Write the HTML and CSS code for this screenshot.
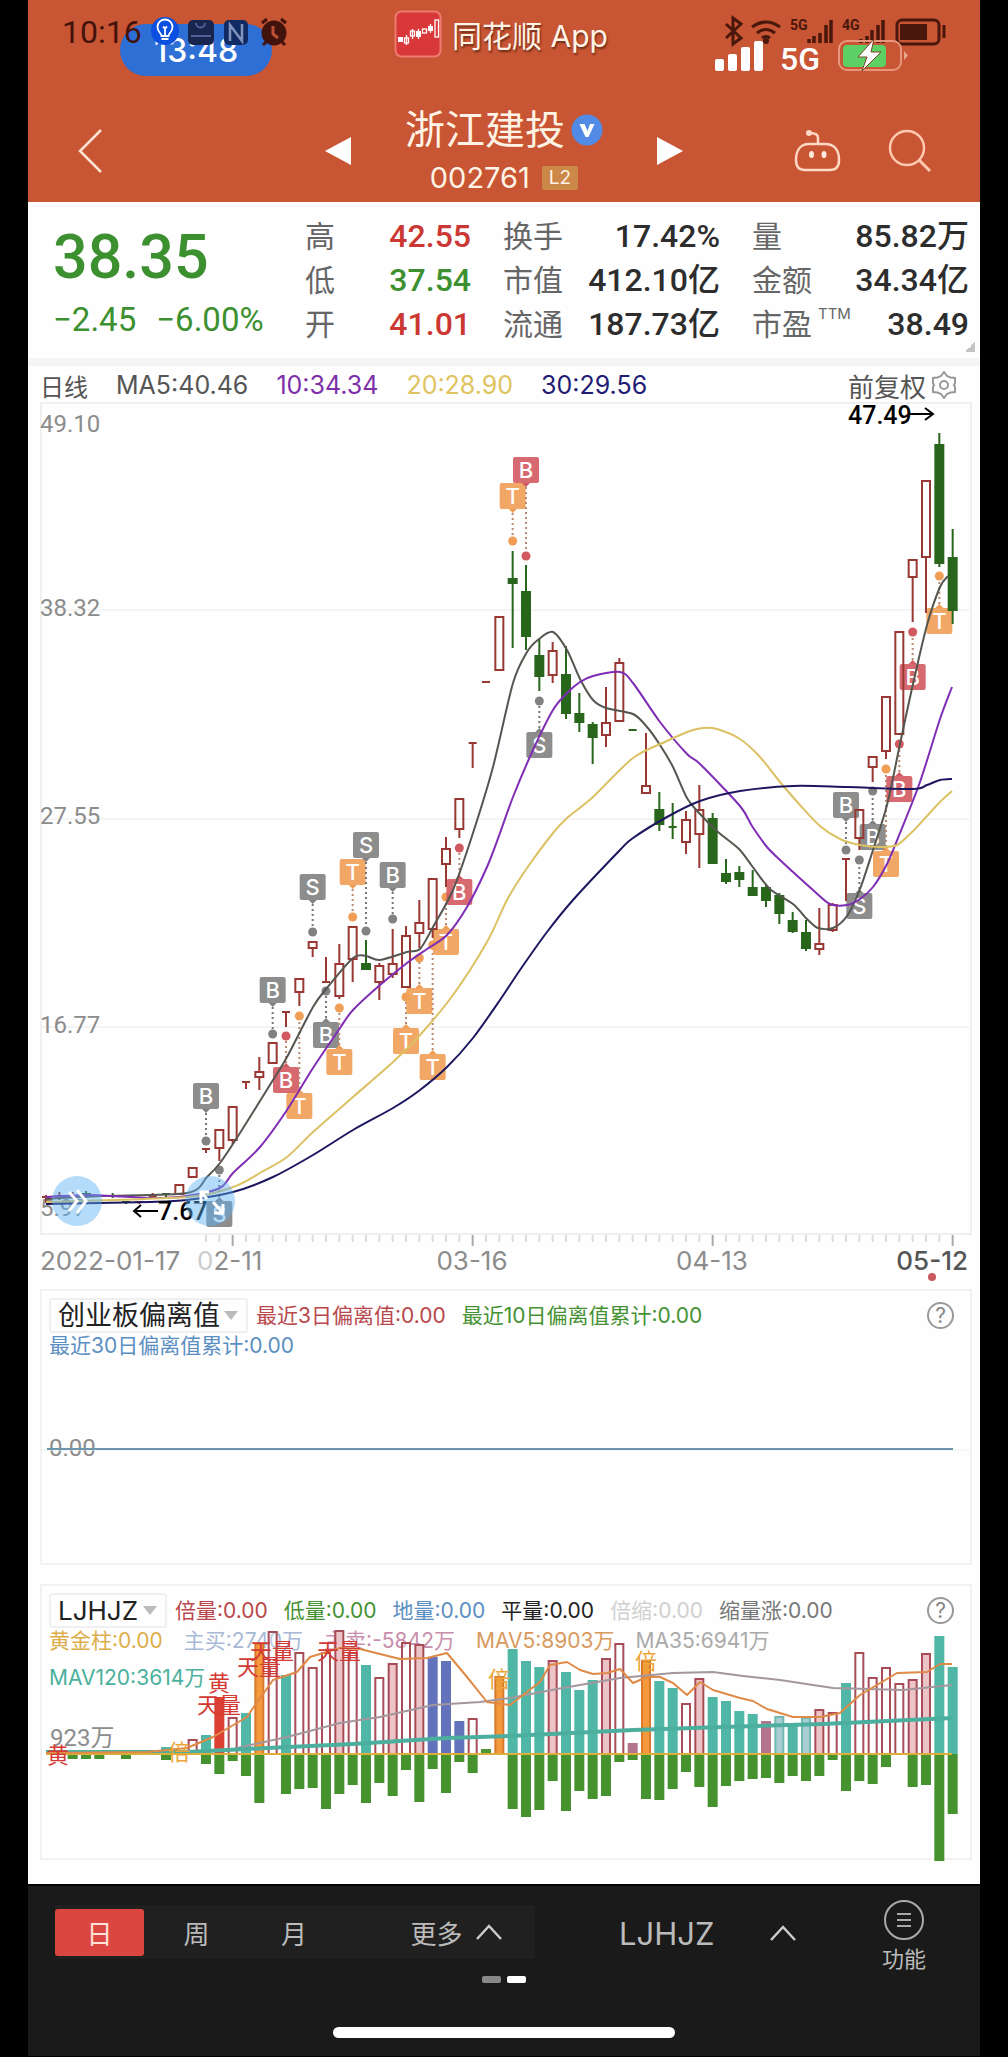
FILE: index.html
```html
<!DOCTYPE html>
<html lang="zh-CN">
<head>
<meta charset="utf-8">
<meta name="viewport" content="width=device-width, initial-scale=1">
<title>浙江建投 002761</title>
<link rel="stylesheet" href="styles.css">
</head>
<body>
<main class="phone">
  <header class="top">
    <div class="status">
      <div class="brand">
        <svg width="48" height="48" viewBox="0 0 48 48"><rect x="1.500" y="1.500" width="45" height="45" rx="6" fill="#d9383b" stroke="#ef7a70" stroke-width="2"/><g fill="#fff"><rect x="4" y="27" width="5" height="5"/><rect x="22" y="21" width="5" height="6"/><rect x="34" y="16" width="5" height="5"/></g><g fill="none" stroke="#fff" stroke-width="1.300"><rect x="10.500" y="28" width="4" height="5"/><rect x="16.500" y="21" width="4" height="5"/><rect x="28.500" y="19" width="4" height="4"/><rect x="41" y="10" width="3.500" height="17"/><path d="M12.500 25v10M18.500 19v10M36.500 14v9M24.500 19v10"/></g></svg>
        <span>同花顺 App</span>
      </div>
      <div class="clock-pill">13:48</div>
      <div class="device-left">
        <span>10:16</span>
        <svg width="140" height="32" viewBox="0 0 140 32">
          <circle cx="15" cy="15" r="14" fill="#0b50e0"/>
          <g fill="none" stroke="#fff" stroke-width="1.800"><path d="M11.500 20c0-3-4-4-4-9a7.500 7.500 0 0 1 15 0c0 5-4 6-4 9zM11.500 23h7M13 10.500l2 2 2-2M15 12v8"/></g>
          <rect x="38" y="4" width="26" height="25" rx="5" fill="#18264f"/><path d="M46 7c0 6 9 6 9 0M41 20h20" fill="none" stroke="#52619a" stroke-width="2"/>
          <rect x="74" y="4" width="24" height="25" rx="5" fill="#102b63"/><path d="M80 25V9l12 16V8" fill="none" stroke="#7f93bd" stroke-width="2.500"/>
          <g stroke="#42130c" fill="none" stroke-width="3"><circle cx="124" cy="17" r="11" fill="#42130c"/><path d="M112 7l5-4M136 7l-5-4M116 26l-3 3M132 26l3 3"/><path d="M123 10v8l5 4" stroke="#bc5034"/></g>
        </svg>
      </div>
      <svg class="device-right" width="232" height="60" viewBox="0 0 232 60">
        <g fill="none" stroke="#4a170d" stroke-width="3">
          <path d="M4 9l15 14-8 6V3l8 6L4 23"/>
          <path d="M30 12q14-10 28 0M35 18q9-7 18 0M40 23q4-3 8 0"/>
          <path d="M87 28v-4M92 28v-7M98 28V18M104 28V10M109 28V5M139 28v-4M145 28v-7M150 28V15M156 28V10M161 28V5" stroke-width="3.500"/>
          <rect x="175" y="5" width="42" height="24" rx="5"/><path d="M222 10v13"/>
        </g>
        <path d="M178 9h27v16h-27z" fill="#4a170d"/>
        <circle cx="44" cy="26" r="3" fill="#4a170d"/>
        <g fill="#4a170d" class="tiny"><text x="68" y="15">5G</text><text x="120" y="15">4G</text></g>
        <g fill="#fff"><rect x="-7" y="44" width="9" height="12" rx="2"/><rect x="6" y="39" width="9" height="17" rx="2"/><rect x="19" y="32" width="9" height="24" rx="2"/><rect x="32" y="26" width="9" height="30" rx="2"/></g>
        <text x="58" y="55" class="net" fill="#fff">5G</text>
        <rect x="117" y="26" width="62" height="29" rx="8" fill="none" stroke="#e8967c" stroke-width="2"/><rect x="121" y="30" width="43" height="22" rx="4" fill="#5cd065"/><path d="M182 36v9l4-4.500z" fill="#e8a590"/><path d="M152 24l-16 18h9l-5 14 19-19h-10z" fill="#fff" stroke="#7a4428" stroke-width="1"/>
      </svg>
    </div>
    <nav class="titlebar">
      <div class="side">
        <button aria-label="返回"><svg width="28" height="46" viewBox="0 0 28 46"><path d="M25 2L4 23l21 21" fill="none" stroke="#ffe3d2" stroke-width="2.500"/></svg></button>
        <button aria-label="上一只"><svg width="26" height="30" viewBox="0 0 26 30"><path d="M26 1v28L0 15z" fill="#fff"/></svg></button>
      </div>
      <div class="stock">
        <h1>浙江建投 <svg width="32" height="32" viewBox="0 0 32 32"><circle cx="16" cy="16" r="15.500" fill="#528be6"/><path d="M8.500 10h5l3 7 2.500-7h4.500l-6 13h-3z" fill="#fff"/></svg></h1>
        <p>002761 <span class="level">L2</span></p>
      </div>
      <div class="side">
        <button aria-label="下一只"><svg width="26" height="30" viewBox="0 0 26 30"><path d="M0 1v28l26-14z" fill="#fff"/></svg></button>
        <span class="tools">
          <button aria-label="智能助手"><svg width="48" height="44" viewBox="0 0 48 44"><g fill="none" stroke="#ffd9c4" stroke-width="2.500"><path d="M15 15h16c10 0 14 7 14 16 0 7-3 10-9 10H11c-6 0-9-3-9-10 0-9 4-16 13-16zM24 15V9c0-3-3-5-8-5"/></g><circle cx="15" cy="4" r="3" fill="#ffd9c4"/><ellipse cx="17.500" cy="25.500" rx="2.500" ry="3.500" fill="#ffe9dc"/><ellipse cx="30" cy="25.500" rx="2.500" ry="3.500" fill="#ffe9dc"/></svg></button>
          <button aria-label="搜索"><svg width="44" height="44" viewBox="0 0 44 44"><circle cx="19" cy="19" r="17" fill="none" stroke="#ffc8b0" stroke-width="2.500"/><path d="M31 31l11 11" stroke="#ffc8b0" stroke-width="3"/></svg></button>
        </span>
      </div>
    </nav>
  </header>

  <section class="quote">
    <div class="price">
      <strong>38.35</strong>
      <p><span>−2.45</span><span>−6.00%</span></p>
    </div>
    <dl>
      <div><dt>高</dt><dd class="up">42.55</dd></div>
      <div><dt>低</dt><dd class="down">37.54</dd></div>
      <div><dt>开</dt><dd class="up">41.01</dd></div>
    </dl>
    <dl>
      <div><dt>换手</dt><dd>17.42%</dd></div>
      <div><dt>市值</dt><dd>412.10亿</dd></div>
      <div><dt>流通</dt><dd>187.73亿</dd></div>
    </dl>
    <dl>
      <div><dt>量</dt><dd>85.82万</dd></div>
      <div><dt>金额</dt><dd>34.34亿</dd></div>
      <div><dt>市盈<sup>TTM</sup></dt><dd>38.49</dd></div>
    </dl>
    <i class="corner"></i>
  </section>

  <div class="averages">
    <span class="period">日线</span>
    <span class="c-ma5">MA5:40.46</span>
    <span class="c-ma10">10:34.34</span>
    <span class="c-ma20">20:28.90</span>
    <span class="c-ma30">30:29.56</span>
    <button class="adjust">前复权<svg width="28" height="28" viewBox="0 0 28 28" fill="none" stroke="#999" stroke-width="2"><path d="M11 5l3-4 3 4 3.500 1.500L25 7v5l-1 2 1 2v5l-4.500.5L17 23l-3 4-3-4-3.500-1.500L3 21v-5l1-2-1-2V7l4.500-.5z"/><circle cx="14" cy="14" r="4"/></svg></button>
  </div>

  <svg id="candles" class="chart main-chart" viewBox="40 402 932 887" role="img" aria-label="日K线图"></svg>

  <section class="panel">
    <svg class="chart" viewBox="40 1289 932 276" role="img" aria-label="偏离值">
      <text x="49" y="1456" class="axis">0.00</text>
      <path d="M41 1450H971" stroke="#eef0f1" stroke-width="1"/>
      <path d="M47 1449H953" stroke="#6d95ad" stroke-width="2"/>
    </svg>
    <div class="legend">
      <div class="row first">
        <span class="picker wide"><select aria-label="指标一"><option>创业板偏离值</option></select><svg width="14" height="9" viewBox="0 0 14 9"><path d="M0 0h14L7 9z" fill="#bbb"/></svg></span>
        <span class="c-red">最近3日偏离值:0.00</span><span class="c-green">最近10日偏离值累计:0.00</span>
        <button class="help" aria-label="说明">?</button>
      </div>
      <div class="row"><span class="c-blue">最近30日偏离值累计:0.00</span></div>
    </div>
  </section>

  <section class="panel">
    <svg id="volume" class="chart" viewBox="40 1584 932 276" role="img" aria-label="成交量"></svg>
    <div class="legend">
      <div class="row first">
        <span class="picker"><select aria-label="指标二"><option>LJHJZ</option></select><svg width="14" height="9" viewBox="0 0 14 9"><path d="M0 0h14L7 9z" fill="#bbb"/></svg></span>
        <span class="c-red">倍量:0.00</span><span class="c-green">低量:0.00</span><span class="c-blue">地量:0.00</span><span class="c-black">平量:0.00</span><span class="c-pale">倍缩:0.00</span><span class="c-gray">缩量涨:0.00</span>
        <button class="help" aria-label="说明">?</button>
      </div>
      <div class="row"><span class="c-gold">黄金柱:0.00</span><span class="c-buy">主买:2740万</span><span class="c-sell">主卖:-5842万</span><span class="c-orange">MAV5:8903万</span><span class="c-silver">MA35:6941万</span></div>
      <div class="row third"><span class="c-teal">MAV120:3614万</span></div>
    </div>
  </section>

  <footer class="toolbar">
    <div class="controls">
      <div class="periods">
        <button class="active">日</button><button>周</button><button>月</button>
        <button class="more">更多<svg width="26" height="16" viewBox="0 0 26 16"><path d="M1 15L13 2l12 13" fill="none" stroke="#ccc" stroke-width="2.500"/></svg></button>
      </div>
      <button class="indicator">LJHJZ<svg width="26" height="16" viewBox="0 0 26 16"><path d="M1 15L13 2l12 13" fill="none" stroke="#ccc" stroke-width="2.500"/></svg></button>
      <button class="features"><svg width="42" height="42" viewBox="0 0 42 42" fill="none" stroke="#aaa" stroke-width="2"><circle cx="21" cy="21" r="19"/><path d="M14 15h14M14 21h14M14 27h14"/></svg>功能</button>
    </div>
    <div class="pages"><i></i><i class="on"></i></div>
    <div class="home"></div>
  </footer>
</main>
<script src="chart.js"></script>
</body>
</html>
```
FILE: styles.css
```css
* { box-sizing: border-box; }
body { margin: 0; background: #000; font-family: Inter, "Noto Sans CJK SC", sans-serif; font-size: 20px; color: #333; }
h1, p, dl, dd { margin: 0; }
button { margin: 0; padding: 0; border: 0; background: none; color: inherit; font: inherit; display: inline-flex; align-items: center; justify-content: center; }
svg { display: block; flex: none; }
.phone { margin: 0 28px; background: #fefefe; }

.top { background: #c85533; color: #fff3e6; }
.status { position: relative; display: flex; justify-content: center; height: 100px; padding-top: 10px; }
.brand { display: flex; align-items: center; gap: 10px; height: 48px; padding-right: 6px; font-size: 30px; text-shadow: 1px 2px 2px #6b2c18; }
.clock-pill { position: absolute; left: 92px; top: 24px; width: 152px; height: 52px; border-radius: 26px; background: #2e6fd6; color: #fff; font-size: 32px; font-weight: 500; line-height: 54px; text-align: center; }
.device-left { position: absolute; left: 34px; top: 14px; display: flex; align-items: center; gap: 8px; color: #42130c; font: 32px/36px Roboto, sans-serif; }
.device-right { position: absolute; right: 26px; top: 15px; overflow: visible; }
.tiny { font: 700 14px Roboto, sans-serif; }
.net { font: 500 32px Roboto, sans-serif; }

.titlebar { display: grid; grid-template-columns: 1fr auto 1fr; gap: 54px; height: 102px; padding: 0 48px 0 48px; }
.side { display: flex; align-items: center; justify-content: space-between; }
.tools { display: flex; gap: 46px; }
.stock { display: flex; flex-direction: column; align-items: center; }
.stock h1 { display: flex; align-items: center; gap: 6px; font-size: 40px; font-weight: 400; line-height: 60px; }
.stock p { display: flex; align-items: center; gap: 12px; font-size: 29px; line-height: 36px; }
.level { padding: 0 7px; border-radius: 2px; background: #cc8848; font-size: 19px; line-height: 24px; }

.quote { position: relative; display: grid; grid-template-columns: 220fr 166fr 217fr 217fr; gap: 32px; padding: 12px 11px 12px 25px; border-bottom: 8px solid #f5f5f5; }
.price { color: #3c9030; font-family: Roboto, sans-serif; }
.price strong { display: block; font-size: 61px; font-weight: 500; line-height: 86px; }
.price p { display: flex; gap: 20px; font-size: 33px; line-height: 40px; white-space: nowrap; }
.quote dl > div { display: flex; justify-content: space-between; height: 44px; line-height: 44px; white-space: nowrap; }
.quote dt { font-size: 30px; color: #666; }
.quote dd { font: 500 32px/44px Roboto, "Noto Sans CJK SC", sans-serif; color: #2d2d2d; }
.quote sup { margin-left: 6px; font-size: 15px; line-height: 1; vertical-align: 16px; }
.quote .up { color: #cb3833; }
.quote .down { color: #3c9030; }
.corner { position: absolute; right: 5px; bottom: 6px; width: 10px; height: 10px; background: linear-gradient(135deg, transparent 50%, #c4c4c4 50%); }

.averages { display: flex; align-items: center; gap: 28px; height: 36px; padding: 2px 22px 0 12px; font-size: 25px; white-space: nowrap; }
.period { font-size: 24px; color: #555; }
.adjust { margin-left: auto; gap: 4px; font-size: 26px; color: #555; }
.c-ma5 { color: #555; } .c-ma10 { color: #7d30a8; } .c-ma20 { color: #dfc35e; } .c-ma30 { color: #211c74; }

.chart { width: 100%; height: auto; overflow: visible; pointer-events: none; }
.main-chart { width: auto; margin: 0 8px 0 12px; }
.axis { font: 24px Roboto, "Noto Sans CJK SC", sans-serif; fill: #8c8c8c; }
.date { font: 26px Inter, sans-serif; fill: #8c8c8c; }
.date.last { font-weight: 500; fill: #555; }
.peak { font: 500 25px Roboto, Inter, sans-serif; fill: #000; }
.tag { font: 500 22px Inter, sans-serif; fill: #fff; text-anchor: middle; }
.word { font: 22px "Noto Sans CJK SC", sans-serif; text-anchor: middle; }
.panel { display: grid; margin: 0 8px 19px 12px; box-shadow: inset 0 0 0 2px #f2f2f2; }
.panel > * { grid-area: 1 / 1; min-width: 0; }
.panel > .chart { z-index: 1; }
.legend { padding: 9px 18px 0 9px; font-size: 21px; line-height: 25px; }
.row { display: flex; gap: 21px; white-space: nowrap; }
.row.first { align-items: center; height: 35px; gap: 16px; }
.row.third { margin-top: 12px; }
.picker { display: flex; align-items: center; gap: 4px; height: 35px; margin-right: -8px; padding: 0 8px 0 7px; border: 2px solid #f0f0f0; border-radius: 3px; }
.picker select { appearance: none; padding: 0; border: 0; background: none; color: #222; font: 26px/30px Inter, "Noto Sans CJK SC", sans-serif; }
.picker.wide select { font-size: 27px; }
.help { width: 27px; height: 27px; margin-left: auto; border: 2px solid #999; border-radius: 50%; color: #888; }
.c-red { color: #b9484c; } .c-green { color: #459232; } .c-blue { color: #5b8fc2; } .c-black { color: #222; } .c-pale { color: #d0d0d0; } .c-gray { color: #777; }
.c-gold { color: #dcae4c; } .c-buy { color: #a8b9d6; } .c-sell { color: #c88fac; } .c-orange { color: #d89a60; } .c-silver { color: #aaa; } .c-teal { color: #4ab09c; }

.toolbar { margin-top: 24px; padding: 12px 0 18px; border-top: 2px solid #050505; background: #1a1a1a; color: #bbb; }
.panel:last-of-type { margin-bottom: 0; }
.controls { display: flex; align-items: center; height: 78px; padding: 0 54px 0 27px; }
.periods { display: grid; grid-template-columns: 89fr 105fr 90fr 196fr; flex: 0 1 480px; height: 54px; align-items: stretch; margin-top: -10px; background: #202020; font-size: 26px; }
.periods .active { height: 47px; align-self: center; border-radius: 3px; background: #dc4640; color: #ffe0d8; }
.more { gap: 13px; padding-left: 38px; }
.indicator { gap: 56px; margin-left: 84px; margin-top: -8px; font-size: 31px; }
.features { flex-direction: column; margin-left: auto; gap: 2px; font-size: 22px; line-height: 32px; }
.pages { display: flex; justify-content: center; gap: 6px; }
.pages i { width: 19px; height: 7px; background: #888; border-radius: 2px; }
.pages .on { background: #fff; }
.home { width: 36%; height: 11px; margin: 44px auto 0; border-radius: 6px; background: #fff; }
```
FILE: chart.js
```js
const x = i => 46 + i * 40 / 3;
const RED = '#993833', GREEN = '#28661c', TEAL = '#50b7a6';

// index, high, body top, body bottom, low, rising
const candles = [
  [0,1195,1197,1198,1203,1],[1,1192,1195,1197,1200,1],[2,1192,1195,1197,1199,1],[3,1191,1193,1195,1198,0],[5,1193,1196,1197,1198,0],
  [6,1201,1202,1203,1204,0],[7,1201,1202,1203,1204,1],[8,1193,1196,1197,1198,1],[9,1193,1194,1195,1197,0],
  [10,1184,1184,1195,1195,1],[11,1167,1167,1178,1178,1],[12,1149,1149,1149,1153,1],[13,1129,1129,1149,1161,1],[14,1106,1106,1141,1144,1],
  [15,1082,1082,1082,1089,1],[16,1057,1071,1078,1090,1],[17,1042,1042,1064,1064,1],[18,1012,1012,1012,1027,1],[19,978,978,993,1006,1],
  [20,941,941,949,957,1],[21,957,982,982,982,1],[22,944,963,997,999,1],[23,926,926,960,982,1],[24,940,963,970,970,0],[25,963,965,983,1000,1],
  [26,929,963,975,978,1],[27,926,935,988,988,1],[28,900,922,934,948,1],[29,878,878,930,938,1],[30,837,848,865,887,1],[31,798,798,830,838,1],
  [32,743,743,743,768,1],[33,682,682,682,682,1],[34,616,616,671,671,1],[35,551,578,584,648,0],[36,565,591,637,650,0],[37,639,655,677,691,0],
  [38,642,650,676,683,1],[39,646,674,714,719,0],[40,693,713,723,732,0],[41,722,724,738,764,0],[42,687,722,736,747,1],[43,658,662,722,722,1],
  [44,730,730,731,731,0],[45,733,785,794,794,1],[46,792,809,825,831,0],[47,803,827,828,839,0],[48,811,819,843,854,1],[49,785,809,835,868,1],
  [50,813,818,864,864,0],[51,859,873,882,884,0],[52,866,872,880,887,0],[53,870,887,896,896,0],[54,884,887,901,907,0],[55,893,895,914,924,0],
  [56,912,920,932,933,0],[57,920,932,949,951,0],[58,908,943,950,955,1],[59,903,904,931,932,1],[60,859,859,859,901,1],[61,809,809,839,850,1],
  [62,756,756,768,782,1],[63,696,696,752,759,1],[64,631,631,735,735,1],[65,559,559,578,622,1],[66,480,480,558,613,1],[67,433,444,564,567,0],[68,529,557,611,624,0]
];

const averages = [
  ['#55564f','46,1199 100,1196 187,1193 207,1177 220,1163 240,1133 273,1080 287,1057 313,1007 327,988 353,958 366,956 380,960 407,952 420,949 433,927 453,890 473,833 493,767 513,683 527,652 539,639 553,632 567,650 580,679 593,700 606,708 633,714 647,727 660,745 673,767 687,798 700,814 718,832 739,849 752,866 770,889 793,904 807,919 818,928 833,928 847,916 860,889 873,850 887,805 900,744 913,684 927,625 940,587 948,576'],
  ['#7f2db4','46,1197 90,1195 150,1198 187,1196 220,1188 233,1173 260,1147 287,1110 313,1068 340,1028 353,1010 380,985 407,963 427,949 447,935 467,907 487,867 500,833 513,797 533,750 553,710 567,693 580,682 593,676 620,672 633,683 660,722 687,754 700,764 740,806 752,826 767,847 780,860 793,872 813,890 830,904 847,905 860,899 873,887 887,864 900,833 920,782 940,719 952,687'],
  ['#dcc163','46,1202 187,1197 233,1187 260,1173 287,1157 313,1132 353,1097 393,1062 420,1035 453,995 487,942 507,900 527,868 553,833 567,818 593,797 633,758 667,741 690,731 703,728 717,729 740,739 760,757 780,782 800,805 820,826 840,839 860,845 880,847 897,845 913,831 927,816 940,802 952,791'],
  ['#1c175e','46,1204 150,1202 187,1200 233,1192 273,1177 313,1155 353,1130 393,1108 420,1090 447,1067 473,1038 500,1000 520,970 547,932 573,900 620,850 633,838 667,817 700,801 740,791 793,786 847,787 913,789 927,785 940,780 952,779']
];

// letter, colour key, candle index, box top, dot centre
const COLORS = { g: '#818181', o: '#f09e55', r: '#d15a60' };
const tags = [
  ['B','g',12,1083,1141],['S','g',13,1201,1170],['B','g',17,977,1034],['B','r',18,1067,1036],['T','o',19,1093,1016],['S','g',20,874,932],
  ['B','g',21,1022,991],['T','o',22,1049,1008],['T','o',23,859,917],['S','g',24,832,931],['B','g',26,862,919],['T','o',27,1028,997],
  ['T','o',28,988,958],['T','o',29,1054,945],['T','o',30,929,897],['B','r',31,879,848],['T','o',35,483,541],['B','r',36,457,556],
  ['S','g',37,732,701],['B','g',60,792,850],['S','g',61,893,860],['B','g',62,824,791],['T','o',63,851,769],['B','r',64,776,744],['B','r',65,664,632],['T','o',67,608,576]
];

const line = (points, color, width) => `<polyline points="${points}" fill="none" stroke="${color}" stroke-width="${width}" stroke-linejoin="round"/>`;

// Catmull-Rom curve through the points
const curve = (points, color) => {
  const p = points.split(' ').map(s => s.split(',').map(Number));
  let d = `M${p[0]}`;
  for (let n = 0; n < p.length - 1; n++) {
    const a = p[n - 1] || p[n], b = p[n], c = p[n + 1], e = p[n + 2] || c;
    const along = (from, by, s) => [0, 1].map(j => (from[j] + s * by[j] / 7).toFixed(1));
    d += `C${along(b, [c[0] - a[0], c[1] - a[1]], 1)} ${along(c, [e[0] - b[0], e[1] - b[1]], -1)} ${c}`;
  }
  return `<path d="${d}" fill="none" stroke="${color}" stroke-width="2"/>`;
};

let k = '<rect x="41" y="403" width="930" height="831" fill="none" stroke="#f0f0f0" stroke-width="2"/>';
k += '<path d="M41 610H971M41 819H971M41 1027H971" stroke="#f4f4f4" stroke-width="2"/>';
[[49.10,432],[38.32,616],[27.55,824],[16.77,1033],[5.97,1216]].forEach(([v, y]) => k += `<text x="40" y="${y}" class="axis">${v.toFixed(2)}</text>`);
for (let i = 12; i < 69; i++) {
  const major = [14, 32, 50, 68].includes(i);
  k += `<path d="M${x(i)} 1235v${major ? 11 : 7}" stroke="${major ? '#aaa' : '#ddd'}" stroke-width="2"/>`;
}
k += '<text x="40" y="1270" class="date">2022-01-17</text><text x="197" y="1270" class="date"><tspan fill="#ccc">0</tspan>2-11</text>';
k += '<text x="472" y="1270" class="date" text-anchor="middle">03-16</text><text x="712" y="1270" class="date" text-anchor="middle">04-13</text>';
k += '<text x="968" y="1270" class="date last" text-anchor="end">05-12</text><circle cx="932" cy="1277" r="4" fill="#c95a5f"/>';

tags.forEach(([letter, c, i, top, dot]) => {
  const cx = x(i), color = COLORS[c], below = top > dot;
  const edge = below ? top : top + 26;
  const tip = below ? top - 4 : top + 30;
  k += `<path d="M${cx} ${tip}V${dot}" stroke="${c === 'g' ? '#777' : '#b98a70'}" stroke-width="2" stroke-dasharray="2 3"/>`;
  k += `<circle cx="${cx}" cy="${dot}" r="4.500" fill="${color}"/>`;
  k += `<path d="M${cx - 4} ${edge}L${cx} ${tip}L${cx + 4} ${edge}z" fill="${color}"/>`;
  k += `<rect x="${cx - 13}" y="${top}" width="26" height="26" rx="2" fill="${color}" fill-opacity=".9"/><text x="${cx}" y="${top + 21}" class="tag">${letter}</text>`;
});
candles.forEach(([i, high, top, bottom, low, rising]) => {
  const cx = x(i), color = rising ? RED : GREEN;
  if (bottom - top < 2) {
    k += `<path d="M${cx} ${high}V${low}M${cx - 4} ${top}h8" stroke="${color}" stroke-width="2"/>`;
  } else {
    k += `<path d="M${cx} ${high}V${top}M${cx} ${bottom}V${low}" stroke="${color}" stroke-width="2"/>`;
    k += `<rect x="${cx - 4}" y="${top + 1}" width="8" height="${bottom - top - 2 || 1}" fill="${rising ? 'none' : color}" stroke="${color}" stroke-width="2"/>`;
  }
});
averages.forEach(([color, points]) => k += curve(points, color));
k += '<text x="848" y="424" class="peak">47.49</text><path d="M909 414h23M925 408l8 6-8 6" stroke="#000" stroke-width="2" fill="none"/>';
k += '<text x="158" y="1220" class="peak">7.67</text><path d="M134 1211h24M141 1205l-7 6 7 6" stroke="#000" stroke-width="2" fill="none"/>';
k += '<g fill="#5cb2f4" fill-opacity=".45"><circle cx="77" cy="1201" r="25"/><circle cx="210" cy="1201" r="25"/></g>';
k += '<path d="M69 1192l8 9-8 10M77 1190l9 11-9 12M201 1203v-11h8M201 1192l6 7M213 1202l10 11M223 1204v9h-9" fill="none" stroke="#fff" stroke-width="3"/>';
document.getElementById('candles').innerHTML = k;

// index, bar kind, top of the bar, bottom of the outflow bar
const BASE = 1754;
const bars = [
  [2,'h',1750,1759],[3,'n',0,1759],[4,'n',0,1759],[6,'n',0,1759],[9,'t',1747,1760],[11,'h',1739,0],[12,'t',1735,1764],[13,'r',1697,1774],[14,'h',1717,1761],
  [15,'t',1713,1776],[16,'o',1643,1803],[17,'h',1631,0],[18,'t',1675,1794],[19,'h',1652,1789],[20,'h',1667,1788],[21,'h',1652,1809],[22,'p',1630,1794],
  [23,'h',1652,1785],[24,'t',1665,1803],[25,'h',1677,1783],[26,'p',1663,1796],[27,'h',1642,1770],[28,'p',1644,1802],[29,'b',1657,1769],[30,'b',1661,1793],
  [31,'b',1721,1762],[32,'h',1718,1773],[33,'g',1749,0],[34,'o',1676,0],[35,'t',1649,1809],[36,'t',1661,1817],[37,'t',1667,1810],[38,'p',1660,1781],
  [39,'t',1672,1811],[40,'t',1690,1791],[41,'t',1680,1799],[42,'p',1658,1796],[43,'h',1643,1762],[44,'m',1743,1760],[45,'o',1660,1799],[46,'t',1681,1800],
  [47,'t',1688,1789],[48,'h',1703,1772],[49,'p',1678,1787],[50,'t',1697,1807],[51,'t',1701,1786],[52,'t',1711,1781],[53,'t',1714,1779],[54,'m',1721,1778],
  [55,'l',1716,1783],[56,'t',1723,1776],[57,'l',1717,1781],[58,'p',1709,1776],[59,'h',1712,1760],[60,'t',1683,1791],[61,'h',1652,1781],[62,'h',1677,1784],
  [63,'h',1667,1767],[64,'h',1683,0],[65,'p',1679,1787],[66,'p',1653,1785],[67,'t',1636,1861],[68,'t',1667,1814]
];
const FILL = { t: TEAL, r: '#dc4032', o: '#f49a3c', p: '#ecc3c7', b: '#6373bb', g: '#4b9632', m: '#b4748e', l: '#a8cdd3', h: '#fff' };
const EDGE = { h: '#a84c58', p: '#a84c58', o: '#d9792c', l: '#70b9ae' };

let v = '<text x="50" y="1746" class="axis">923万</text>';
bars.forEach(([i, kind, top, bottom]) => {
  const cx = x(i);
  if (top) {
    const edge = EDGE[kind];
    v += edge
      ? `<rect x="${cx - 4}" y="${top + 1}" width="8" height="${BASE - top - 1}" fill="${FILL[kind]}" fill-opacity="${kind === 'h' ? .3 : 1}" stroke="${edge}" stroke-width="2"/>`
      : `<rect x="${cx - 5}" y="${top}" width="10" height="${BASE - top}" fill="${FILL[kind]}"/>`;
  }
  if (bottom) v += `<rect x="${cx - 5}" y="${BASE}" width="10" height="${bottom - BASE}" fill="#46922f"/>`;
});
v += line('237,1748 287,1737 340,1723 380,1717 433,1705 480,1702 510,1698 557,1689 620,1678 673,1673 713,1672 743,1676 780,1680 833,1688 903,1690 952,1685', '#a3979d', 2);
v += line('46,1752 147,1752 187,1752 267,1748 353,1744 447,1738 510,1736 633,1730 723,1727 823,1724 952,1718', '#4cae9e', 4);
v += line('46,1754 952,1754', '#ddae39', 2);
v += line('46,1753 147,1752 187,1748 213,1737 247,1717 253,1708 273,1680 297,1672 310,1657 340,1648 360,1649 400,1659 427,1658 447,1653 467,1677 487,1702 510,1705 540,1682 550,1665 567,1662 580,1670 593,1674 607,1673 620,1669 633,1683 647,1677 660,1677 673,1683 687,1695 700,1682 713,1690 740,1698 753,1701 767,1709 793,1717 820,1717 840,1713 860,1695 897,1673 927,1672 940,1664 952,1664', '#df8a47', 2);
[['黄',58,1763,0],['黄',219,1691,0],['天量',219,1713,0],['天量',259,1675,0],['天量',272,1659,0],['天量',339,1659,0],['倍',179,1760,1],['倍',499,1687,1],['倍',646,1669,1]]
  .forEach(([word, cx, y, gold]) => v += `<text x="${cx}" y="${y}" class="word" fill="${gold ? '#eba536' : '#d43a34'}">${word}</text>`);
document.getElementById('volume').innerHTML = v;
```
